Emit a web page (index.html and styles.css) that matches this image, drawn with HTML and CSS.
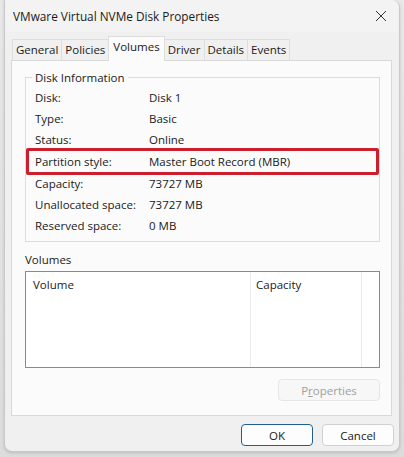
FILE: index.html
```html
<!DOCTYPE html>
<html>
  <head>
    <meta name="viewport" content="width=device-width, initial-scale=1.0">
    <link rel="stylesheet" href="styles.css">
  </head>
  <body>
    <div class="desk">
      <div class="window">
        <div class="titlebar">
          <span class="title">VMware Virtual NVMe Disk Properties</span>
          <svg class="close" width="12" height="12" viewBox="0 0 12 12">
            <path d="M1 1 L11 11 M11 1 L1 11" stroke="#333" stroke-width="1"/>
          </svg>
        </div>
        <div class="tabs">
          <div class="tab">General</div>
          <div class="tab">Policies</div>
          <div class="tab active">Volumes</div>
          <div class="tab">Driver</div>
          <div class="tab">Details</div>
          <div class="tab">Events</div>
        </div>
        <div class="panel">
          <fieldset class="group">
            <legend>Disk Information</legend>
            <div class="row"><span class="key">Disk:</span><span>Disk 1</span></div>
            <div class="row"><span class="key">Type:</span><span>Basic</span></div>
            <div class="row"><span class="key">Status:</span><span>Online</span></div>
            <div class="row mark"><span class="key">Partition style:</span><span>Master Boot Record (MBR)</span></div>
            <div class="row"><span class="key">Capacity:</span><span>73727 MB</span></div>
            <div class="row"><span class="key">Unallocated space:</span><span>73727 MB</span></div>
            <div class="row"><span class="key">Reserved space:</span><span>0 MB</span></div>
          </fieldset>
          <div class="vol-label">Volumes</div>
          <div class="list">
            <div class="col name">Volume</div>
            <div class="col cap">Capacity</div>
            <div class="col rest"></div>
          </div>
          <div class="panel-actions">
            <button class="btn disabled">P<u>r</u>operties</button>
          </div>
        </div>
        <div class="footer">
          <button class="btn default">OK</button>
          <button class="btn">Cancel</button>
        </div>
      </div>
    </div>
  </body>
</html>
```

FILE: styles.css
```css
body {
  margin: 0;
  background: #d6d6d6;
  font-family: "Open Sans", "Noto Sans", sans-serif;
  font-size: 11.5px;
  color: #1a1a1a;
}
.desk {
  height: 457px;
  padding: 0 4px 0 4px;
  box-sizing: border-box;
  background: linear-gradient(#e8e8e8, #dcdcdc);
}
.window {
  height: 452px;
  background: #f0f0f0;
  border: 1px solid #c8c8c8;
  border-top: none;
  border-radius: 0 8px 8px 8px;
  box-sizing: border-box;
  display: flex;
  flex-direction: column;
  box-shadow: 0 1px 3px rgba(0,0,0,0.15);
}
.titlebar {
  height: 32px;
  display: flex;
  align-items: center;
  justify-content: space-between;
  padding: 0 12px 0 8px;
  background: #f3f3f3;
  border-radius: 0 8px 0 0;
}
.title {
  font-size: 11.8px;
}
.tabs {
  display: flex;
  padding: 0 0 0 7px;
  height: 28px;
  align-items: flex-end;
}
.tab {
  height: 21px;
  line-height: 20px;
  padding: 0 3px;
  border: 1px solid #dedede;
  border-bottom: none;
  background: #f0f0f0;
  margin-right: -1px;
  box-sizing: border-box;
}
.tab.active {
  height: 25px;
  line-height: 20px;
  background: #fbfbfb;
  margin-bottom: -1px;
  position: relative;
  z-index: 1;
  padding: 0 4px;
}
.panel {
  margin: 0 7px 0 6px;
  border: 1px solid #d9d9d9;
  background: #fbfbfb;
  height: 356px;
  box-sizing: border-box;
  padding: 9px 11px 0 13px;
}
.group {
  margin: 0;
  padding: 2px 0 6px 0;
  border: 1px solid #dcdcdc;
  height: 172px;
  box-sizing: border-box;
}
.group legend {
  padding: 0 3px;
  margin-left: 6px;
}
.row {
  display: flex;
  height: 21px;
  align-items: center;
  padding-left: 8px;
  margin: 0 1px;
}
.row .key {
  width: 114px;
}
.row.mark {
  outline: 3px solid #cc1f2d;
  outline-offset: -3px;
  border-radius: 2px;
  height: 27px;
  margin: -2px 0 -2px 0;
  padding-left: 9px;
}
.vol-label {
  margin-top: 10px;
  height: 16px;
}
.list {
  margin-top: 3px;
  height: 97px;
  border: 1px solid #8a8a8a;
  background: #fff;
  display: flex;
  box-sizing: border-box;
}
.col {
  padding: 5px 7px;
  border-right: 1px solid #eaeaea;
  box-sizing: border-box;
}
.col.name {
  width: 225px;
}
.col.cap {
  width: 111px;
  padding-left: 5px;
}
.col.rest {
  border-right: none;
}
.panel-actions {
  display: flex;
  justify-content: flex-end;
  margin-top: 11px;
}
.btn {
  font-family: inherit;
  font-size: 11.5px;
  height: 22px;
  width: 72px;
  background: #fdfdfd;
  border: 1px solid #d0d0d0;
  border-radius: 4px;
  color: #1a1a1a;
  padding: 0;
}
.btn.disabled {
  width: 102px;
  color: #a0a0a0;
  background: #f7f7f7;
  border-color: #e6e6e6;
}
.btn.default {
  border: 1px solid #1f5f8f;
  box-shadow: inset 0 0 0 1px #fff;
}
.footer {
  display: flex;
  justify-content: flex-end;
  gap: 9px;
  padding: 8px 5px 0 0;
}
```
